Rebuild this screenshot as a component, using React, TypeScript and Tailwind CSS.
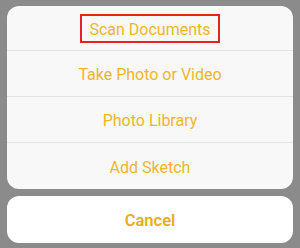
export default function App() {
  const items = ['Take Photo or Video', 'Photo Library', 'Add Sketch']

  return (
    <div
      className="w-[300px] h-[248px] bg-[#8b8b8b] px-[7px] pt-[6px] flex flex-col gap-[7px]"
      style={{ fontFamily: 'Roboto, "Liberation Sans", Arial, sans-serif' }}
    >
      {/* action sheet */}
      <div className="bg-[#f8f8f8] rounded-[12px] overflow-hidden flex flex-col">
        <div className="h-[45px] flex items-center justify-center border-b border-[#e4e4e4]">
          <span className="border-2 border-[#e8231f] px-[7px] pt-[4px] pb-[2px] leading-[19px] text-[16px] text-[#edb62a]">
            Scan Documents
          </span>
        </div>
        {items.map((item, i) => (
          <button
            key={item}
            className={`h-[46px] pt-[3px] flex items-center justify-center text-[16px] text-[#edb62a] ${
              i < items.length - 1 ? 'border-b border-[#e4e4e4]' : ''
            }`}
          >
            {item}
          </button>
        ))}
      </div>

      {/* cancel */}
      <button className="h-[47px] pt-[3px] bg-white rounded-[12px] flex items-center justify-center text-[16.5px] font-semibold text-[#e9ad17]">
        Cancel
      </button>
    </div>
  )
}
